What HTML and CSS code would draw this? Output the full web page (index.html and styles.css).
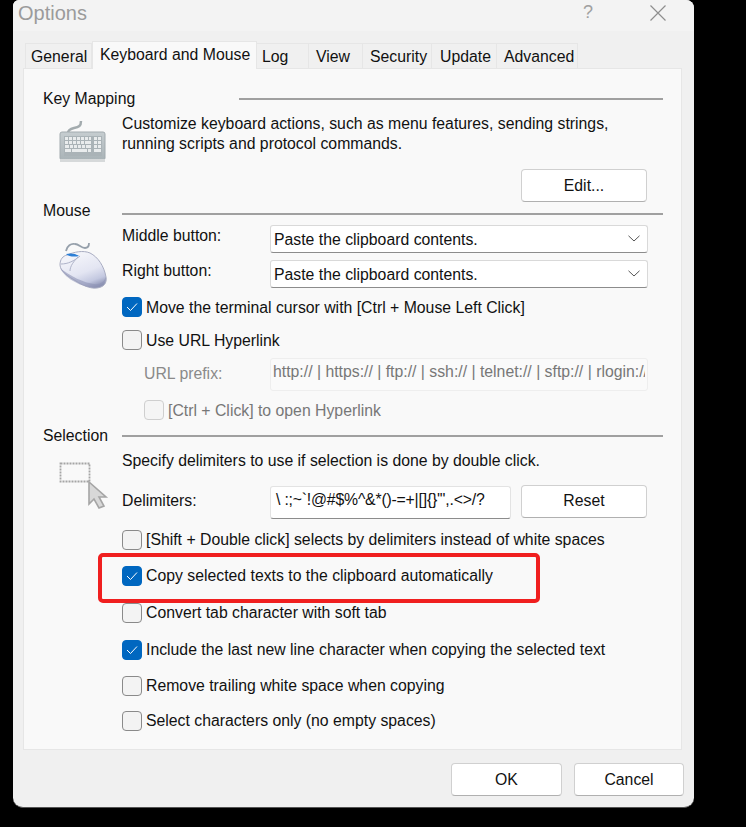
FILE: index.html
```html
<!DOCTYPE html>
<html lang="en">
<head>
<meta charset="utf-8">
<title>Options</title>
<link rel="stylesheet" href="styles.css">
</head>
<body>
<div class="window">
  <div class="titlebar">
    <span class="title">Options</span>
    <span class="help">?</span>
    <svg class="close" width="16" height="16" viewBox="0 0 16 16"><path d="M.5.5l15 15M15.5.5l-15 15" stroke="#8e8e8e" stroke-width="1.2" fill="none"/></svg>
  </div>
  <div class="tabs">
    <div class="tab t-general">General</div>
    <div class="tab active t-keyboard">Keyboard and Mouse</div>
    <div class="tab t-log">Log</div>
    <div class="tab t-view">View</div>
    <div class="tab t-security">Security</div>
    <div class="tab t-update">Update</div>
    <div class="tab t-advanced">Advanced</div>
  </div>
  <div class="panel">
    <div class="head head-key"><span class="head-title">Key Mapping</span><span class="head-line"></span></div>
    <div class="section">
      <div class="icon-col">
        <svg class="icon-keyboard" width="48" height="44" viewBox="0 0 48 44">
          <defs><linearGradient id="kb" x1="0" y1="0" x2="0" y2="1"><stop offset="0" stop-color="#c6cdd0"/><stop offset="1" stop-color="#a9b3b7"/></linearGradient></defs>
          <path d="M9 13c0-3 2-4 6-5 5-1 7-2 7-7" stroke="#a3abae" stroke-width="2.5" fill="none"/>
          <rect x="1" y="12" width="45" height="28" rx="2" fill="url(#kb)" stroke="#a2abaf"/>
          <rect x="1" y="39" width="45" height="3" fill="#d6d9da"/>
          <rect x="5" y="16" width="38" height="20" fill="#aab3b7"/>
          <g fill="#e9eced">
            <rect x="6" y="17" width="3" height="3"/><rect x="10" y="17" width="3" height="3"/><rect x="14" y="17" width="3" height="3"/><rect x="18" y="17" width="3" height="3"/><rect x="22" y="17" width="3" height="3"/><rect x="26" y="17" width="3" height="3"/><rect x="30" y="17" width="2" height="3"/><rect x="35" y="17" width="3" height="3"/><rect x="39" y="17" width="3" height="3"/>
            <rect x="6" y="21" width="3" height="3"/><rect x="10" y="21" width="3" height="3"/><rect x="14" y="21" width="3" height="3"/><rect x="18" y="21" width="3" height="3"/><rect x="22" y="21" width="3" height="3"/><rect x="26" y="21" width="6" height="3"/><rect x="35" y="21" width="3" height="3"/><rect x="39" y="21" width="3" height="3"/>
            <rect x="6" y="25" width="4" height="3"/><rect x="11" y="25" width="3" height="3"/><rect x="15" y="25" width="3" height="3"/><rect x="19" y="25" width="3" height="3"/><rect x="23" y="25" width="3" height="3"/><rect x="27" y="25" width="5" height="3"/><rect x="35" y="25" width="3" height="3"/><rect x="39" y="25" width="3" height="3"/>
            <rect x="6" y="29" width="6" height="3"/><rect x="13" y="29" width="15" height="3"/><rect x="29" y="29" width="3" height="3"/><rect x="35" y="29" width="7" height="3"/>
          </g>
        </svg>
      </div>
      <div class="content">
        <p class="desc">Customize keyboard actions, such as menu features, sending strings,<br>running scripts and protocol commands.</p>
        <div class="edit-row"><button class="btn btn-side">Edit...</button></div>
      </div>
    </div>

    <div class="head head-mouse"><span class="head-title">Mouse</span><span class="head-line"></span></div>
    <div class="section">
      <div class="icon-col">
        <svg class="icon-mouse" width="50" height="50" viewBox="0 0 50 50">
          <defs>
            <linearGradient id="ms" x1="0.3" y1="0.15" x2="0.7" y2="1"><stop offset="0" stop-color="#f2f3f9"/><stop offset=".5" stop-color="#e3e5f2"/><stop offset=".8" stop-color="#c3c8e0"/><stop offset="1" stop-color="#8d93b4"/></linearGradient>
          </defs>
          <path d="M8 10c1-5 5-8 9-7 4 0 6 4 10 4 3 0 4-2 4-5" stroke="#96a0ab" stroke-width="1.8" fill="none"/>
          <path d="M2 24c0-6 3-9 7-10 7-3 16-5 23-2 8 4 14 13 16 24 1 6-2 10-9 11-7 1-15-3-21-7-7-4-16-10-16-16z" fill="url(#ms)" stroke="#a9adc2"/>
          <path d="M2 27c3 6 9 11 15 14 7 4 14 6 21 5 6-1 10-5 10-10-2 5-6 8-12 7-10-1-24-8-34-16z" fill="#8f95b6" opacity=".6"/>
          <path d="M3 23c7 0 13-3 19-8M20 16c-4 4-8 9-8 14" stroke="#aeb3c9" stroke-width="1" fill="none"/>
          <path d="M8 13c4-1 9-1 13 2-4 1-10 1-13-2z" fill="#2c7fd6"/>
        </svg>
      </div>
      <div class="content">
        <div class="form-row row-select first"><span class="label">Middle button:</span><div class="select">Paste the clipboard contents.<svg class="chev" width="12" height="7" viewBox="0 0 12 7"><path d="M.5.8L6 6l5.5-5.2" stroke="#555" fill="none"/></svg></div></div>
        <div class="form-row row-select second"><span class="label">Right button:</span><div class="select">Paste the clipboard contents.<svg class="chev" width="12" height="7" viewBox="0 0 12 7"><path d="M.5.8L6 6l5.5-5.2" stroke="#555" fill="none"/></svg></div></div>
        <label class="check m9"><span class="box on"><svg width="12" height="10" viewBox="0 0 12 10"><path d="M1 5l3.5 3.5L11 1.5" stroke="#fff" fill="none"/></svg></span><span class="nudge">Move the terminal cursor with [Ctrl + Mouse Left Click]</span></label>
        <label class="check m13"><span class="box"></span><span class="nudge">Use URL Hyperlink</span></label>
        <div class="form-row row-url"><span class="label label-url">URL prefix:</span><div class="input input-url"><span class="clip">http:// | https:// | ftp:// | ssh:// | telnet:// | sftp:// | rlogin://</span></div></div>
        <label class="check m9 sub disabled"><span class="box"></span><span class="nudge">[Ctrl + Click] to open Hyperlink</span></label>
      </div>
    </div>

    <div class="head head-selection"><span class="head-title">Selection</span><span class="head-line"></span></div>
    <div class="section">
      <div class="icon-col">
        <svg class="icon-select" width="50" height="48" viewBox="0 0 50 48">
          <rect x="1.5" y="1.5" width="29" height="18" fill="none" stroke="#a5a5a5" stroke-width="1.8" stroke-dasharray="2 1"/>
          <path d="M30 20v22l5-5 5 9 5-2-5-9h7z" fill="#d8d8d8" stroke="#a5a5a5" stroke-width="1.6"/>
        </svg>
      </div>
      <div class="content">
        <p class="specify">Specify delimiters to use if selection is done by double click.</p>
        <div class="form-row row-delim"><span class="label label-delim">Delimiters:</span><div class="input input-delim">\ :;~`!@#$%^&amp;*()-=+|[]{}'",.&lt;&gt;/?</div><button class="btn btn-reset">Reset</button></div>
        <label class="check m11"><span class="box"></span>[Shift + Double click] selects by delimiters instead of white spaces</label>
        <label class="check m16"><span class="box on"><svg width="12" height="10" viewBox="0 0 12 10"><path d="M1 5l3.5 3.5L11 1.5" stroke="#fff" fill="none"/></svg></span>Copy selected texts to the clipboard automatically</label>
        <label class="check m17"><span class="box"></span>Convert tab character with soft tab</label>
        <label class="check m17"><span class="box on"><svg width="12" height="10" viewBox="0 0 12 10"><path d="M1 5l3.5 3.5L11 1.5" stroke="#fff" fill="none"/></svg></span>Include the last new line character when copying the selected text</label>
        <label class="check m16"><span class="box"></span>Remove trailing white space when copying</label>
        <label class="check m15"><span class="box"></span>Select characters only (no empty spaces)</label>
      </div>
    </div>
  </div>
  <div class="footer">
    <button class="btn btn-ok">OK</button>
    <button class="btn btn-cancel">Cancel</button>
  </div>
  <div class="highlight"></div>
</div>
</body>
</html>
```
FILE: styles.css
```css
* { box-sizing: border-box; }
html, body { margin: 0; padding: 0; height: 827px; background: #000; overflow: hidden; }
body { font-family: "Liberation Sans", Arial, sans-serif; font-size: 15.8px; color: #111; }
.window {
  position: relative;
  width: 681px;
  height: 808px;
  margin-left: 13px;
  background: #f0f0f0;
  border-radius: 6px 8px 10px 10px;
  border-bottom: 1px solid #555;
}
.titlebar {
  position: relative;
  height: 31px;
  background: #f3f3f3;
  border-radius: 6px 8px 0 0;
  display: flex;
  align-items: center;
}
.title { margin-left: 5px; margin-bottom: 5px; font-size: 20px; color: #9b9b9b; }
.help { position: absolute; left: 570px; top: 2px; font-size: 18px; color: #a0a0a0; }
.close { position: absolute; left: 637px; top: 5px; }
.tabs { display: flex; align-items: flex-end; height: 37px; padding-left: 12px; }
.tab {
  height: 25px;
  border: 1px solid #e6e6e6;
  border-bottom: 0;
  border-left: 0;
  background: #f0f0f0;
  line-height: 25px;
  white-space: nowrap;
  position: relative;
}
.t-general { width: 67px; border-left: 1px solid #e6e6e6; padding-left: 5px; }
.t-keyboard { width: 165px; padding-left: 7px; }
.t-log { width: 52px; padding-left: 5px; }
.t-view { width: 54px; padding-left: 7px; }
.t-security { width: 69px; padding-left: 7px; }
.t-update { width: 65px; padding-left: 8px; }
.t-advanced { width: 81px; padding-left: 7px; }
.tab.active {
  height: 28px;
  background: #f9f9f9;
  line-height: 26px;
  margin-bottom: -1px;
  z-index: 1;
  border-left: 1px solid #e6e6e6;
}
.panel {
  width: 659px;
  height: 682px;
  margin-left: 10px;
  padding: 22px 18px 0 19px;
  background: #f9f9f9;
  border: 1px solid #e6e6e6;
}
.head { display: flex; height: 16px; line-height: 16px; position: relative; }
.head-title { white-space: nowrap; }
.head-line { position: absolute; right: 0; height: 2px; background: #a0a0a0; }
.head-key .head-line { left: 196px; top: 7px; }
.head-mouse .head-line { left: 79px; top: 11px; }
.head-mouse .head-title { padding-top: 1px; }
.head-selection { margin-top: 8px; }
.head-selection .head-line { left: 79px; top: 7px; }
.section { display: flex; }
.icon-col { width: 79px; flex: none; }
.icon-keyboard { display: block; margin: 13px 0 0 16px; }
.icon-mouse { display: block; margin: 23px 0 0 15px; }
.icon-select { display: block; margin: 18px 0 0 16px; }
.content { flex: 1; min-width: 0; }
.desc { margin: 7px 0 0; line-height: 19.5px; }
.edit-row { display: flex; justify-content: flex-end; margin-top: 16px; padding-right: 16px; }
.btn {
  font: inherit;
  color: #111;
  background: #fff;
  border: 1px solid #d0d0d0;
  border-bottom-color: #b0b0b0;
  border-radius: 4px;
  padding: 0;
}
.btn-side { width: 126px; height: 33px; }
.form-row { display: flex; align-items: center; }
.row-select { height: 28px; }
.row-select.first { margin-top: 7px; }
.row-select.second { margin-top: 7px; }
.row-select .label { padding-bottom: 7px; }
.label { width: 148px; flex: none; white-space: nowrap; }
.select {
  position: relative;
  width: 378px;
  height: 28px;
  line-height: 27px;
  padding-left: 3px;
  background: #fff;
  border: 1px solid #d9d9d9;
  border-bottom-color: #8c8c8c;
  border-radius: 3px;
  white-space: nowrap;
}
.chev { position: absolute; right: 7px; top: 9px; }
.check { display: flex; align-items: center; height: 20px; white-space: nowrap; }
.nudge { padding-top: 2px; }
.box {
  width: 20px;
  height: 20px;
  flex: none;
  margin-right: 4px;
  border: 1px solid #8a8a8a;
  border-radius: 4px;
  background: #f3f3f3;
  display: flex;
  align-items: center;
  justify-content: center;
}
.box.on { background: #0067c0; border-color: #0067c0; }
.m9 { margin-top: 9px; }
.m11 { margin-top: 11px; }
.m13 { margin-top: 13px; }
.m15 { margin-top: 15px; }
.m16 { margin-top: 16px; }
.m17 { margin-top: 17px; }
.row-url { height: 33px; margin-top: 8px; }
.label-url { padding-left: 22px; color: #8a8a8a; padding-bottom: 1px; }
.input { height: 33px; line-height: 26px; white-space: nowrap; overflow: hidden; padding-left: 3px; }
.input-url { width: 378px; background: #fafafa; border: 1px solid #eee; color: #777; border-radius: 3px; padding-left: 2px; }
.clip { display: block; width: 372px; overflow: hidden; }
.sub { margin-left: 22px; }
.disabled { color: #777; }
.disabled .box { background: #f5f5f5; border-color: #cfcfcf; }
.specify { margin: 7px 0 0; line-height: 20px; }
.row-delim { height: 34px; margin-top: 14px; }
.label-delim { padding-bottom: 2px; }
.input-delim { width: 241px; background: #fff; border: 1px solid #e3e3e3; border-bottom-color: #8c8c8c; border-radius: 3px; padding-left: 5px; letter-spacing: -0.2px; }
.btn-reset { width: 126px; height: 33px; margin-left: 10px; margin-bottom: 1px; padding-bottom: 1px; }
.footer { display: flex; justify-content: flex-end; gap: 12px; padding: 13px 0 0 0; width: 671px; }
.btn-ok, .btn-cancel { width: 111px; height: 33px; }
.btn-cancel { width: 110px; }
.highlight {
  position: absolute;
  left: 85px;
  top: 553px;
  width: 442px;
  height: 50px;
  border: 4px solid #f01f1f;
  border-radius: 5px;
}
```
